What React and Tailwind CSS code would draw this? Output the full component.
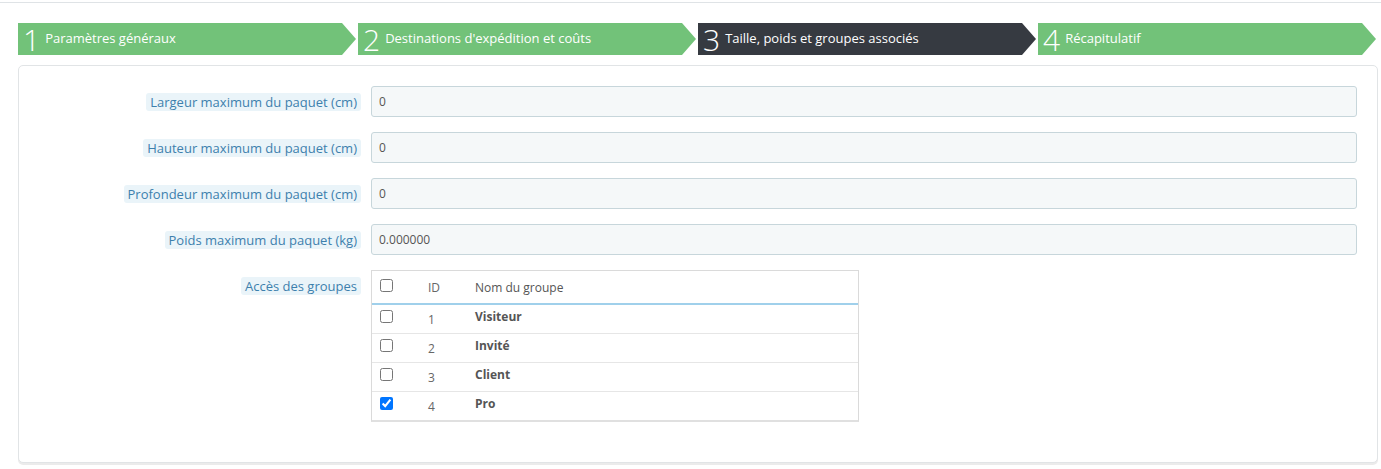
import React from 'react';

const steps = [
  { num: 1, label: 'Paramètres généraux', active: false },
  { num: 2, label: "Destinations d'expédition et coûts", active: false },
  { num: 3, label: 'Taille, poids et groupes associés', active: true },
  { num: 4, label: 'Récapitulatif', active: false },
];

const fields = [
  { label: 'Largeur maximum du paquet (cm)', value: '0' },
  { label: 'Hauteur maximum du paquet (cm)', value: '0' },
  { label: 'Profondeur maximum du paquet (cm)', value: '0' },
  { label: 'Poids maximum du paquet (kg)', value: '0.000000' },
];

const groups = [
  { id: 1, name: 'Visiteur', checked: false },
  { id: 2, name: 'Invité', checked: false },
  { id: 3, name: 'Client', checked: false },
  { id: 4, name: 'Pro', checked: true },
];

const Step = ({ num, label, active }) => (
  <div className="flex-1 flex pr-[2px]">
    <div
      className={`flex-1 h-[32px] flex items-center pl-[5px] text-white ${
        active ? 'bg-[#363a41]' : 'bg-[#72c279]'
      }`}
    >
      <span className="text-[30px] font-light leading-none mr-[5px] translate-y-[1px]">{num}</span>
      <span className="text-[13px]">{label}</span>
    </div>
    {/* arrow tip */}
    <div
      className={`w-0 h-0 border-y-[16px] border-y-transparent border-l-[14px] ${
        active ? 'border-l-[#363a41]' : 'border-l-[#72c279]'
      }`}
    />
  </div>
);

const FieldRow = ({ label, value }) => (
  <div className="flex items-center mb-[15px]">
    <div className="w-[342px] flex justify-end">
      <span className="bg-[#eaf4f9] text-[#3d80ad] text-[13px] leading-[18px] px-[4px] rounded-[3px]">
        {label}
      </span>
    </div>
    <div className="flex-1 ml-[10px] h-[31px] flex items-center px-[7px] bg-[#f5f8f9] border border-[#c7d6db] rounded-[3px] text-[12px] text-[#555]">
      {value}
    </div>
  </div>
);

export default function App() {
  return (
    <div className="w-[1381px] h-[469px] bg-white font-['Open_Sans',sans-serif] overflow-hidden">
      <div className="h-[3px] border-b border-[#dfe3e6]" />

      {/* wizard steps */}
      <div className="flex mx-[18px] mt-[20px] mr-[3px]">
        {steps.map((s) => (
          <Step key={s.num} {...s} />
        ))}
      </div>

      {/* panel */}
      <div className="mx-[18px] mr-[3px] mt-[10px] h-[398px] bg-white border border-[#e1e4e6] rounded-[5px] shadow-[0_2px_0_rgba(0,0,0,0.08)] pt-[20px] pr-[20px]">
        {fields.map((f) => (
          <FieldRow key={f.label} {...f} />
        ))}

        <div className="flex items-start">
          <div className="w-[342px] flex justify-end pt-[7px]">
            <span className="bg-[#eaf4f9] text-[#3d80ad] text-[13px] leading-[18px] px-[4px] rounded-[3px]">
              Accès des groupes
            </span>
          </div>
          <div className="ml-[10px] w-[488px] border border-[#dadada] border-b-2 border-b-[#e0e0e0]">
            <table className="w-full text-[12px] text-[#555] border-collapse">
              <thead>
                <tr className="h-[33px] border-b-2 border-[#a0d0eb]">
                  <th className="w-[48px] pl-[8px] text-left align-middle">
                    <input type="checkbox" className="block w-[13px] h-[13px] -translate-y-[2px]" />
                  </th>
                  <th className="w-[47px] pl-[8px] text-left font-normal text-[#666]">
                    <span className="inline-block translate-y-[1px]">ID</span>
                  </th>
                  <th className="pl-[8px] text-left font-normal">
                    <span className="inline-block translate-y-[1px]">Nom du groupe</span>
                  </th>
                </tr>
              </thead>
              <tbody>
                {groups.map((g, i) => (
                  <tr
                    key={g.id}
                    className={`h-[29px] ${i < groups.length - 1 ? 'border-b border-[#e6e6e6]' : ''}`}
                  >
                    <td className="pl-[8px]">
                      <input
                        type="checkbox"
                        defaultChecked={g.checked}
                        className="block w-[13px] h-[13px] -translate-y-[2px]"
                      />
                    </td>
                    <td className="pl-[8px] text-[#666]">
                      <span className="inline-block translate-y-[1px]">{g.id}</span>
                    </td>
                    <td className="pl-[8px] font-bold">
                      <span className="inline-block -translate-y-[2px]">{g.name}</span>
                    </td>
                  </tr>
                ))}
              </tbody>
            </table>
          </div>
        </div>
      </div>
    </div>
  );
}
